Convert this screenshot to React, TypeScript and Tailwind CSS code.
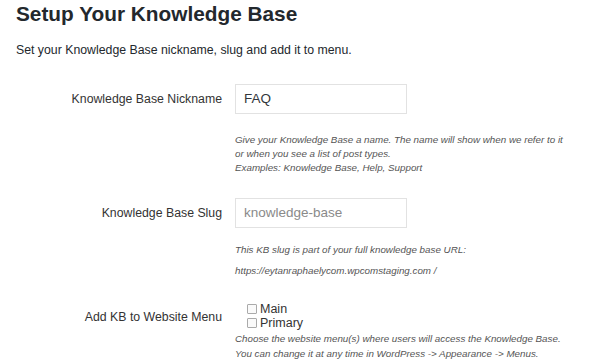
export default function App() {
  return (
    <div className="w-[610px] h-[362px] overflow-hidden bg-white text-[#23282d]" style={{ fontFamily: '"Liberation Sans", Arial, sans-serif' }}>
      <h1 className="pl-4 pt-[1px] text-[20.8px] leading-[26px] font-bold text-[#23282d]">Setup Your Knowledge Base</h1>
      <p className="pl-4 mt-[15px] text-[12.3px] leading-[16px] text-[#23282d]">
        Set your Knowledge Base nickname, slug and add it to menu.
      </p>

      <div className="mt-[26px] flex">
        <div className="w-[222px] shrink-0 text-right text-[12.3px] leading-[30px] text-[#333]">Knowledge Base Nickname</div>
        <div className="ml-[13px]">
          <div className="w-[172px] h-[30px] border border-[#e2e2e2] px-[8px] text-[13.5px] leading-[28px] text-[#32373c]">FAQ</div>
          <div className="mt-[19px] text-[9.8px] italic leading-[14px] text-[#555]">
            <p>Give your Knowledge Base a name. The name will show when we refer to it</p>
            <p>or when you see a list of post types.</p>
            <p>Examples: Knowledge Base, Help, Support</p>
          </div>
        </div>
      </div>

      <div className="mt-[23px] flex">
        <div className="w-[222px] shrink-0 text-right text-[12.3px] leading-[30px] text-[#333]">Knowledge Base Slug</div>
        <div className="ml-[13px]">
          <div className="w-[172px] h-[30px] border border-[#e2e2e2] px-[8px] text-[13.5px] leading-[28px] text-[#8a8a8a]">knowledge-base</div>
          <div className="mt-[15px] text-[9.8px] italic text-[#555]">
            <p className="leading-[13px]">This KB slug is part of your full knowledge base URL:</p>
            <p className="mt-[8px] leading-[13px]">https://eytanraphaelycom.wpcomstaging.com /</p>
          </div>
        </div>
      </div>

      <div className="mt-[25px] flex">
        <div className="w-[222px] shrink-0 pt-[7px] text-right text-[12.3px] leading-[16px] text-[#333]">Add KB to Website Menu</div>
        <div className="ml-[13px]">
          <div className="pl-[12px] text-[12.5px] leading-[14px] text-[#333]">
            <label className="flex items-center gap-[3px]">
              <span className="inline-block w-[10px] h-[10px] border border-[#aaa] rounded-[1px] bg-[#fafafa]" />
              Main
            </label>
            <label className="flex items-center gap-[3px]">
              <span className="inline-block w-[10px] h-[10px] border border-[#aaa] rounded-[1px] bg-[#fafafa]" />
              Primary
            </label>
          </div>
          <div className="mt-[1px] text-[9.8px] italic text-[#555]">
            <p className="leading-[15px]">Choose the website menu(s) where users will access the Knowledge Base.</p>
            <p className="leading-[15px]">You can change it at any time in WordPress -&gt; Appearance -&gt; Menus.</p>
          </div>
        </div>
      </div>
    </div>
  );
}
